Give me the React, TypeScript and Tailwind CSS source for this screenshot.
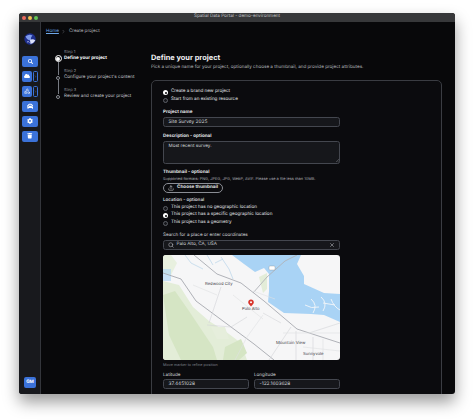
import React from 'react';
import { Shapes, ChevronRight, Upload, X, Search } from 'lucide-react';
import { FaSearch, FaCloud, FaCar, FaCog, FaTrash } from 'react-icons/fa';

const Radio = ({ on, label }: { on?: boolean; label: string }) => (
  <div className="flex items-center h-[7.5px] gap-[3px]">
    {on ? (
      <span className="w-[5px] h-[5px] rounded-full bg-white flex items-center justify-center shrink-0">
        <span className="w-[2px] h-[2px] rounded-full bg-[#0a0a0c]" />
      </span>
    ) : (
      <span className="w-[5px] h-[5px] rounded-full border-[0.5px] border-[#5c5f67] bg-[#16171b] shrink-0" />
    )}
    <span className="text-[4.6px] leading-none text-[#e2e4e8] whitespace-nowrap">{label}</span>
  </div>
);

const Field = ({ value, className }: { value: string; className?: string }) => (
  <div className={`h-[10px] rounded-[2.5px] border-[0.5px] border-[#44474f] bg-[#16171b] pl-[4.5px] pt-[1px] flex items-center text-[4.8px] text-[#d5d7db] ${className ?? ''}`}>
    {value}
  </div>
);

const Label = ({ children, className }: { children: React.ReactNode; className?: string }) => (
  <div className={`text-[4.6px] leading-[7px] font-bold text-[#e2e4e8] ${className ?? ''}`}>{children}</div>
);

const Step = ({ n, label, active }: { n: number; label: string; active?: boolean }) => (
  <div className="h-[19px] flex gap-[2.5px]">
    <div className="w-[7px] flex flex-col items-center pt-[6px] shrink-0">
      {active ? (
        <span className="w-[7px] h-[7px] rounded-full border-[0.5px] border-white flex items-center justify-center shrink-0">
          <span className="w-[4px] h-[4px] rounded-full bg-white" />
        </span>
      ) : (
        <span className="w-[4px] h-[4px] rounded-full border-[0.5px] border-[#8a8d94] shrink-0 mt-[1.5px]" />
      )}
      {n < 3 && <span className="w-[0.75px] flex-1 bg-[#777a82] mb-[-7px]" />}
    </div>
    <div>
      <div className="text-[4px] leading-[6px] text-[#8a8d94]">Step {n}</div>
      <div className={`text-[4.6px] leading-[7px] whitespace-nowrap ${active ? 'font-bold text-white' : 'text-[#c4c6cc]'}`}>{label}</div>
    </div>
  </div>
);

const SideBtn = ({ children, tab }: { children: React.ReactNode; tab?: boolean }) => (
  <div className="h-[11px] flex gap-[1px]">
    <div className={`${tab ? 'w-[10px]' : 'w-[16px]'} h-[11px] rounded-[2px] bg-[#3b72d9] flex items-center justify-center`}>
      {children}
    </div>
    {tab && (
      <div className="w-[5px] h-[11px] rounded-[1.5px] border-[0.5px] border-[#3b72d9] flex items-center justify-center">
        <ChevronRight size={3} color="#9db8ea" />
      </div>
    )}
  </div>
);

const MapView = () => (
  <svg viewBox="0 0 177 105" className="block w-[177px] h-[105px]" preserveAspectRatio="none" fontFamily="Inter, sans-serif">
    <rect width="177" height="105" fill="#f6f6f7" />
    {/* hills */}
    <path d="M0 26 L16 30 L30 52 L46 66 L62 76 L78 88 L84 105 L0 105 Z" fill="#e3edd8" />
    <path d="M0 40 L12 36 L26 56 L38 74 L50 92 L54 105 L18 105 L6 80 Z" fill="#d5e5c4" />
    <path d="M62 92 L78 84 L84 98 L76 105 L60 105 Z" fill="#d5e5c4" />
    <path d="M0 0 H8 L14 8 L8 20 L0 18 Z" fill="#e8f0df" />
    <path d="M48 72 L62 72 L66 84 L54 84 Z" fill="#e6eedc" />
    <path d="M96 22 L104 18 L104 34 L100 38 Z" fill="#e3edd8" />
    {/* bay */}
    <path d="M69 0 H138 L134 9 L141 21 L141 29 L161 38 L177 39 L177 67 L161 60 L148 59 L121 58 L105 47 L106 36 L106 19 L101 13 L92 17 L81 9 Z" fill="#a9d3f5" />
    <path d="M148 44 Q155 50 150 58 M158 42 Q165 48 160 56 M168 44 Q171 52 177 55 M142 50 Q148 54 156 52 M160 48 L172 50" stroke="#f4f6f8" strokeWidth="0.9" fill="none" />
    <path d="M0 14 H8 V26 H0 Z" fill="#a9d3f5" opacity="0.6" />
    {/* roads */}
    <path d="M31 0 L54 19 L78 28 L101 46 L134 74 L177 88" stroke="#b0b2b8" strokeWidth="1" fill="none" />
    <path d="M0 18 L18 24 L33 46 L64 69 L91 89 L111 105" stroke="#a6a8af" strokeWidth="0.9" fill="none" />
    <path d="M90 38 L104 22 L122 6 L134 0" stroke="#b0b2b8" strokeWidth="0.9" fill="none" />
    <path d="M44 0 L50 10 M58 2 L66 14 L70 24 M22 0 L28 8 L40 14 M52 8 L60 4" stroke="#b8d4ea" strokeWidth="0.7" fill="none" />
    <path d="M58 32 L46 68 M84 62 L68 72 L44 70 M128 72 L106 105 M100 58 L118 68 M133 76 L133 105 M146 78 L177 68 M150 82 L150 105" stroke="#d4d5d9" strokeWidth="0.6" fill="none" />
    <path d="M100 60 L84 82 L72 105 M112 44 L90 36 M160 84 L160 105 M70 40 L100 64 M120 78 L177 78 M140 92 L177 96 M30 30 L54 40" stroke="#dfe0e3" strokeWidth="0.6" fill="none" />
    <rect x="106" y="11" width="6" height="4" rx="1" fill="#ffffff" stroke="#777" strokeWidth="0.3" />
    {/* labels */}
    <text x="42" y="29.5" fontSize="4.2" fill="#3f4147">Redwood City</text>
    <text x="79" y="54.5" fontSize="4.2" fill="#3f4147">Palo Alto</text>
    <text x="113" y="88.5" fontSize="4.2" fill="#3f4147">Mountain View</text>
    <text x="140" y="99.5" fontSize="4.2" fill="#3f4147">Sunnyvale</text>
    {/* marker */}
    <path d="M88 44.5 C86.3 44.5 85.2 45.8 85.2 47.3 C85.2 49 88 51.5 88 51.5 C88 51.5 90.8 49 90.8 47.3 C90.8 45.8 89.7 44.5 88 44.5 Z" fill="#d8352c" />
    <circle cx="88" cy="47.3" r="1" fill="#ffffff" />
  </svg>
);

const App = () => {
  return (
    <div className="w-[474px] h-[420px] bg-white pt-[13px] pl-[19px] font-['Inter',sans-serif] [text-rendering:geometricPrecision] overflow-hidden">
      <div className="w-[436px] h-[381px] rounded-[3px] overflow-hidden bg-[#08080a] flex flex-col shadow-[0_8px_16px_rgba(0,0,0,0.4)]">
        {/* title bar */}
        <div className="h-[9px] bg-[#37383a] flex items-center pl-[2.5px] gap-[2px] relative shrink-0">
          <span className="w-[4px] h-[4px] rounded-full bg-[#ec6a5e]" />
          <span className="w-[4px] h-[4px] rounded-full bg-[#f4bf4f]" />
          <span className="w-[4px] h-[4px] rounded-full bg-[#61c554]" />
          <span className="absolute inset-0 flex items-center justify-center text-[4.6px] text-[#c0c1c3]">Spatial Data Portal - demo-environment</span>
        </div>
        <div className="flex flex-1 min-h-0">
          {/* sidebar */}
          <div className="w-[22px] bg-[#18191d] border-r-[0.5px] border-[#33353b] flex flex-col items-start pl-[3px] pt-[10.5px] shrink-0">
            <svg width="12" height="12" viewBox="0 0 12 12" className="ml-[2px]">
              <circle cx="6" cy="6" r="5.7" fill="#1f2f8e" />
              <path d="M1.5 3.5 Q5 0.5 8.5 2.5 Q6 5 7.5 7.5 Q3.5 8 1.5 3.5 Z" fill="#7f9bec" />
              <path d="M6 7 Q9 5.5 11.3 7.5 Q9.5 10.5 6.5 11 Z" fill="#dde3fa" />
              <path d="M3 9 Q4.5 8 5.5 9.5" stroke="#c9d3f6" strokeWidth="0.8" fill="none" />
            </svg>
            <div className="flex flex-col gap-[4px] mt-[11px]">
              <SideBtn><FaSearch size={5} color="white" /></SideBtn>
              <SideBtn tab><FaCloud size={6} color="white" /></SideBtn>
              <SideBtn tab><Shapes size={6.5} color="white" strokeWidth={2} /></SideBtn>
              <SideBtn><FaCar size={6.5} color="white" /></SideBtn>
              <SideBtn><FaCog size={6} color="white" /></SideBtn>
              <SideBtn><FaTrash size={5.5} color="white" /></SideBtn>
            </div>
            <div className="mt-auto mb-[6px] ml-[2px] w-[12px] h-[11px] pt-[1px] rounded-[2px] bg-[#3b72d9] flex items-center justify-center text-[4.6px] font-bold text-white">GM</div>
          </div>

          {/* steps */}
          <div className="w-[110px] shrink-0 pl-[5px] pt-[6px]">
            <div className="flex items-center text-[4.6px] leading-[7px]">
              <span className="text-[#6fa8e8] underline">Home</span>
              <ChevronRight size={5} color="#8a8d94" className="mx-[2.5px]" />
              <span className="text-[#b4b6bc]">Create project</span>
            </div>
            <div className="mt-[14px] pl-[8.5px]">
              <Step n={1} label="Define your project" active />
              <Step n={2} label="Configure your project's content" />
              <Step n={3} label="Review and create your project" />
            </div>
          </div>

          {/* content */}
          <div className="flex-1 min-w-0 overflow-hidden">
            <div className="pt-[31px] h-[58px]">
              <div className="text-[7.4px] leading-[10px] font-bold text-[#f2f3f5] whitespace-nowrap">Define your project</div>
              <div className="text-[4.6px] leading-[7px] text-[#b4b6bc] whitespace-nowrap mt-[0.5px]">Pick a unique name for your project, optionally choose a thumbnail, and provide project attributes.</div>
            </div>
            <div className="w-[291px] h-[340px] rounded-t-[5px] border-[0.5px] border-[#3a3c42] bg-[#0b0b0e] pl-[11px] pt-[8px]">
              <Radio on label="Create a brand new project" />
              <Radio label="Start from an existing resource" />
              <div className="w-[177px]">
                <Label className="mt-[5px]">Project name</Label>
                <Field value="Site Survey 2025" className="mt-[1px]" />
                <Label className="mt-[5.5px]">Description - optional</Label>
                <div className="relative h-[23px] mt-[1px] rounded-[2.5px] border-[0.5px] border-[#44474f] bg-[#16171b] pl-[4.5px] pt-[1px] text-[4.6px] leading-[7px] text-[#d5d7db]">
                  Most recent survey.
                  <svg width="3" height="3" viewBox="0 0 3 3" className="absolute right-[0.5px] bottom-[0.5px]">
                    <path d="M0 3 L3 0 M1.5 3 L3 1.5" stroke="#8a8d94" strokeWidth="0.4" />
                  </svg>
                </div>
                <Label className="mt-[5px]">Thumbnail - optional</Label>
                <div className="text-[3.9px] leading-[5px] text-[#a8aab0] whitespace-nowrap">Supported formats: PNG, JPEG, JPG, WebP, AVIF. Please use a file less than 10MB.</div>
                <div className="mt-[2px] w-[60px] h-[10px] pt-[1px] rounded-full border-[0.5px] border-[#8a8d94] flex items-center justify-center gap-[3px] text-[4.6px] font-bold text-[#e0e1e4]">
                  <Upload size={6} color="#e0e1e4" className="-mt-[1px]" />
                  Choose thumbnail
                </div>
                <Label className="mt-[4px] font-medium">Location - optional</Label>
                <div className="mt-[1px]">
                  <Radio label="This project has no geographic location" />
                  <Radio on label="This project has a specific geographic location" />
                  <Radio label="This project has a geometry" />
                </div>
                <div className="mt-[5px] text-[4.6px] leading-[7px] text-[#d5d7db] whitespace-nowrap">Search for a place or enter coordinates</div>
                <div className="mt-[1px] h-[10px] pt-[1px] rounded-[2.5px] border-[0.5px] border-[#44474f] bg-[#16171b] px-[4px] flex items-center gap-[2.5px] text-[4.6px] text-[#d5d7db]">
                  <Search size={6} color="#c8cad0" className="-mt-[1px]" />
                  <span className="flex-1">Palo Alto, CA, USA</span>
                  <X size={6} color="#c8cad0" className="-mt-[1px]" />
                </div>
                <div className="mt-[5px] rounded-[3px] overflow-hidden">
                  <MapView />
                </div>
                <div className="mt-[2px] text-[3.8px] leading-[6px] text-[#7d8087] whitespace-nowrap">Move marker to refine position</div>
                <div className="grid grid-cols-2 gap-[5px] mt-[4px]">
                  <div>
                    <div className="text-[4.6px] leading-[7px] text-[#d5d7db]">Latitude</div>
                    <Field value="37.4451028" />
                  </div>
                  <div>
                    <div className="text-[4.6px] leading-[7px] text-[#d5d7db]">Longitude</div>
                    <Field value="-122.1603628" />
                  </div>
                </div>
              </div>
            </div>
          </div>
        </div>
      </div>
    </div>
  );
};

export default App;
